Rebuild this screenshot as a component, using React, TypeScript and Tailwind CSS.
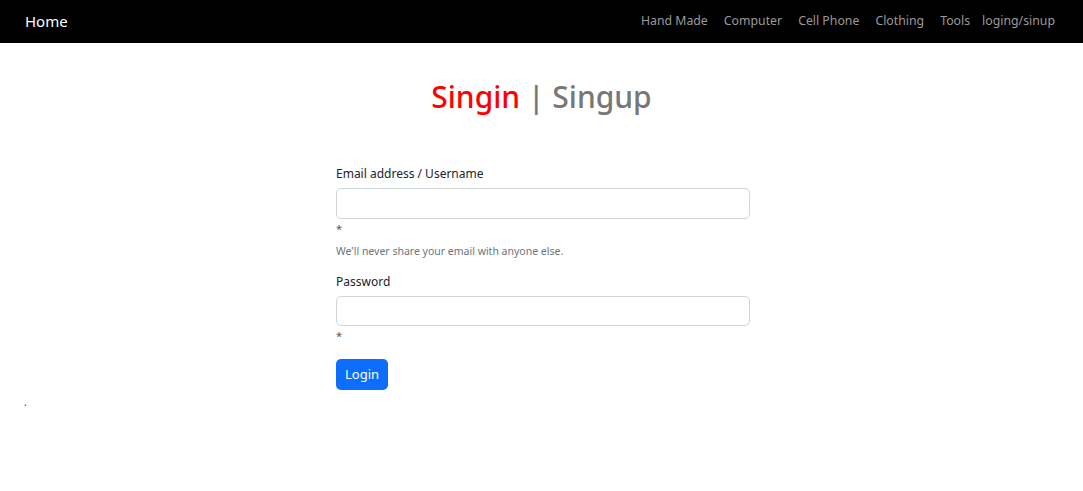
import React from 'react'

const NAV_LINKS = ['Hand Made', 'Computer', 'Cell Phone', 'Clothing', 'Tools']

const font = { fontFamily: '"Noto Sans", "Open Sans", sans-serif' }

export default function App() {
  return (
    <div className="min-h-screen bg-white text-[#212529]" style={font}>
      {/* Navbar */}
      <nav className="h-[43px] bg-black flex items-center justify-between pl-[25px] pr-[28px]">
        <a href="#" className="text-white text-[15px] leading-none">Home</a>
        <div className="flex items-center text-[12.3px] text-[#9a9a9a]">
          {NAV_LINKS.map((link) => (
            <a key={link} href="#" className="px-[8px] hover:text-white">{link}</a>
          ))}
          <a href="#" className="pl-[4px] hover:text-white">loging/sinup</a>
        </div>
      </nav>

      {/* Title */}
      <h1 className="text-center text-[30px] font-medium mt-[34px] leading-[40px]">
        <span className="text-[#ff0000]">Singin</span>
        <span className="text-[#777777]"> | Singup</span>
      </h1>

      {/* Form */}
      <div className="flex justify-center pl-[3px]">
        <form className="w-[414px] mt-[48px]">
          <div>
            <label className="block text-[12px] mb-[5px]">Email address / Username</label>
            <input type="text" className="block w-full h-[31px] rounded-[5px] border border-[#ced4da] px-3 outline-none" />
            <div className="text-[11px] text-[#555] mt-[2px] leading-[16px]">*</div>
            <div className="text-[10.5px] text-[#6c757d] mt-[7px]">We'll never share your email with anyone else.</div>
          </div>
          <div className="mt-[13px]">
            <label className="block text-[12px] mb-[5px]">Password</label>
            <input type="password" className="block w-full h-[30px] rounded-[5px] border border-[#ced4da] px-3 outline-none" />
            <div className="text-[11px] text-[#555] mt-[2px] leading-[16px]">*</div>
          </div>
          <button type="button" className="mt-[15px] w-[52px] h-[31px] rounded-[5px] bg-[#0d6efd] text-white text-[13px]">
            Login
          </button>
        </form>
      </div>

      <div className="pl-[24px] mt-[7px] text-[10px] leading-none">.</div>
    </div>
  )
}
